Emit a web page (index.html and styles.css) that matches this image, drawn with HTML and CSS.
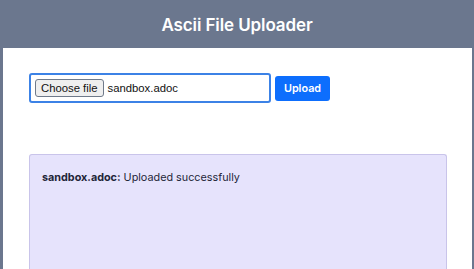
FILE: index.html
```html
<!DOCTYPE html>
<html lang="en">
<head>
<meta charset="utf-8">
<title>Ascii File Uploader</title>
<link rel="stylesheet" href="styles.css">
</head>
<body>
<header class="app-header">
  <h1 class="app-title">Ascii File Uploader</h1>
</header>
<main class="panel">
  <form class="upload-form">
    <div class="file-field">
      <span class="file-button">Choose file</span>
      <span class="file-name">sandbox.adoc</span>
    </div>
    <button type="button" class="upload-button">Upload</button>
  </form>
  <section class="result">
    <p class="result-line"><strong>sandbox.adoc:</strong> Uploaded successfully</p>
  </section>
</main>
</body>
</html>
```
FILE: styles.css
```css
* { box-sizing: border-box; }
html, body { height: 100%; }
body {
  margin: 0;
  background: #6b778e;
  font-family: Inter, "Liberation Sans", sans-serif;
  display: flex;
  flex-direction: column;
  overflow: hidden;
}
.app-header {
  flex: 0 0 48px;
  height: 48px;
  display: flex;
  align-items: center;
  justify-content: center;
  padding-top: 2px;
}
.app-title {
  margin: 0;
  color: #ffffff;
  font-size: 17px;
  font-weight: 600;
  letter-spacing: -0.1px;
}
.panel {
  flex: 1;
  min-height: 0;
  margin: 0 2px 0 3px;
  background: #ffffff;
  padding: 25px 25px 0 26px;
  display: flex;
  flex-direction: column;
}
.upload-form {
  display: flex;
  align-items: center;
  gap: 4px;
}
.file-field {
  width: 242px;
  height: 30px;
  border: 2px solid #3c82e6;
  border-radius: 3px;
  display: flex;
  align-items: center;
  padding-left: 4px;
  gap: 4px;
}
.file-button {
  font-family: "Liberation Sans", Arial, sans-serif;
  font-size: 11.3px;
  color: #111;
  background: #efefef;
  border: 1px solid #6f7a8a;
  border-radius: 3px;
  padding: 0 5px;
  height: 18px;
  line-height: 16px;
  white-space: nowrap;
}
.file-name {
  font-family: "Liberation Sans", Arial, sans-serif;
  font-size: 11.3px;
  color: #111;
  white-space: nowrap;
}
.upload-button {
  width: 55px;
  height: 25px;
  border: none;
  border-radius: 3px;
  background: #0d6efd;
  color: #ffffff;
  font-family: Inter, "Liberation Sans", sans-serif;
  font-size: 10.8px;
  font-weight: 600;
  padding: 0;
}
.result {
  margin-top: 51px;
  width: 418px;
  flex: 1;
  background: #e6e3fc;
  border: 1px solid #c9c4ea;
  border-bottom: none;
  border-radius: 3px 3px 0 0;
  padding: 16px 12px;
}
.result-line {
  margin: 0;
  font-size: 10.8px;
  color: #1e2538;
}
.result-line strong { font-weight: 700; }
```
